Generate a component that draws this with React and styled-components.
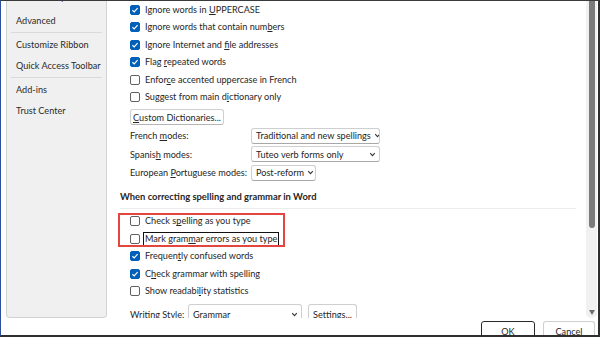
import React from "react";
import styled, { createGlobalStyle } from "styled-components";

const GlobalStyle = createGlobalStyle`
  body {
    margin: 0;
    overflow: hidden;
    background: #fff;
    font-family: Lato, "Noto Sans", sans-serif;
    color: #262626;
  }
`;

const Frame = styled.div`
  width: 600px;
  height: 337px;
  box-sizing: border-box;
  border-top: 1px solid #3a3a3a;
  border-bottom: 2px solid #2e2e2e;
  border-left: 1px solid #2d4f9e;
  border-right: 2px solid #2e2e2e;
  display: flex;
  flex-direction: column;
  overflow: hidden;
  font-size: 9.15px;
`;

const Body = styled.div`
  display: flex;
  height: 317px;
  flex-shrink: 0;
`;

const SideColumn = styled.div`
  width: 106px;
  padding-left: 5px;
  box-sizing: border-box;
  flex-shrink: 0;
`;

const SidePanel = styled.div`
  height: 100%;
  box-sizing: border-box;
  background: #f0f0f0;
  border: 1px solid #d2d2d2;
  border-top: none;
  border-radius: 0 0 4px 4px;
  overflow: hidden;
  padding: 0 4px;
`;

const SideList = styled.div`
  margin-top: -14.5px;
`;

const SideItem = styled.div`
  height: 21px;
  line-height: 21px;
  padding-left: 5px;
  white-space: nowrap;
  color: #2b2b2b;
  &:first-child {
    height: 23px;
    line-height: 20px;
  }
`;

const SideSep = styled.div`
  height: 1px;
  margin: 1px 0;
  background: #dadada;
`;

const Main = styled.div`
  flex: 1;
  display: flex;
  overflow: hidden;
`;

const Content = styled.div`
  flex: 1;
  padding: 0 10px 0 13px;
  overflow: hidden;
`;

const Row = styled.div`
  display: flex;
  align-items: center;
  gap: 5px;
  height: 17.5px;
  margin-left: 10px;
  white-space: nowrap;
`;

const Box = styled.span`
  width: 10px;
  height: 10px;
  box-sizing: border-box;
  border-radius: 2px;
  border: 1px solid ${(p) => (p.$checked ? "#005fb8" : "#616161")};
  background: ${(p) => (p.$checked ? "#005fb8" : "#fff")};
  display: inline-flex;
  align-items: center;
  justify-content: center;
  flex-shrink: 0;
`;

const Label = styled.span`
  padding: 0 1px;
  line-height: 12px;
  border: 1px solid ${(p) => (p.$focused ? "#111" : "transparent")};
  margin-left: -2px;
`;

const Key = styled.span`
  text-decoration: underline;
  text-underline-offset: 1px;
`;

const Button = styled.button`
  font: inherit;
  color: #262626;
  background: #fff;
  border: 1px solid ${(p) => (p.$primary ? "#2a2a2a" : "#cfcfcf")};
  border-bottom-color: ${(p) => (p.$primary ? "#2a2a2a" : "#b5b5b5")};
  border-radius: 3px;
  height: ${(p) => p.$h || 16}px;
  width: ${(p) => p.$w}px;
  padding: 0;
  display: inline-flex;
  align-items: center;
  justify-content: center;
  white-space: nowrap;
  flex-shrink: 0;
`;

const DictButton = styled(Button)`
  margin: 3px 0 1.5px 10px;
`;

const ModeRow = styled.div`
  display: flex;
  align-items: center;
  height: 18.5px;
  margin-left: 10px;
  white-space: nowrap;
`;

const ModeLabel = styled.span`
  width: ${(p) => p.$w}px;
  flex-shrink: 0;
`;

const Select = styled.div`
  width: ${(p) => p.$w}px;
  height: ${(p) => p.$h || 16}px;
  box-sizing: border-box;
  border: 1px solid #cfcfcf;
  border-bottom-color: #a8a8a8;
  border-radius: 3px;
  display: flex;
  align-items: center;
  justify-content: space-between;
  gap: 3px;
  padding: 0 3px 0 4px;
  flex-shrink: 0;
  overflow: hidden;
  svg {
    flex-shrink: 0;
  }
`;

const Heading = styled.div`
  font-weight: 700;
  font-size: 9.4px;
  line-height: 16px;
  padding: 7px 0 3px;
  margin-bottom: 3.5px;
  border-bottom: 1px solid #ededed;
  white-space: nowrap;
`;

const Highlight = styled.div`
  position: relative;
  &::after {
    content: "";
    position: absolute;
    left: -2px;
    top: 0.5px;
    width: 167px;
    height: 33.5px;
    box-sizing: border-box;
    border: 2px solid #e4463f;
    pointer-events: none;
  }
`;

const StyleRow = styled(ModeRow)`
  margin-top: 5px;
  height: 18px;
  gap: 6px;
`;

const ScrollTrack = styled.div`
  width: 11px;
  margin-right: 1px;
  background: #f1f1f1;
  border-radius: 0 0 5px 5px;
  display: flex;
  flex-direction: column;
  align-items: center;
  flex-shrink: 0;
`;

const Thumb = styled.div`
  width: 6px;
  height: 227px;
  background: #7b7b7b;
  border-radius: 0 0 3px 3px;
`;

const Arrow = styled.div`
  margin-top: auto;
  margin-bottom: 3px;
  width: 0;
  height: 0;
  border-left: 3.5px solid transparent;
  border-right: 3.5px solid transparent;
  border-top: 5px solid #6d6d6d;
`;

const Footer = styled.div`
  flex: 1;
  display: flex;
  justify-content: flex-end;
  gap: 8px;
  padding: 3px 3px 0 0;
`;

const Check = () => (
  <svg width="8" height="8" viewBox="0 0 8 8">
    <path d="M1.4 4.2 L3.2 5.9 L6.6 2.2" fill="none" stroke="#fff" strokeWidth="1.2" />
  </svg>
);

const Chevron = () => (
  <svg width="7" height="5" viewBox="0 0 7 5">
    <path d="M1.2 1.2 L3.5 3.6 L5.8 1.2" fill="none" stroke="#333" strokeWidth="1.1" />
  </svg>
);

const Option = ({ checked, focused, children }) => (
  <Row>
    <Box $checked={checked}>{checked && <Check />}</Box>
    <Label $focused={focused}>{children}</Label>
  </Row>
);

export default function App() {
  return (
    <>
      <GlobalStyle />
      <Frame>
        <Body>
          <SideColumn>
            <SidePanel>
              <SideList>
                <SideItem>Accessibility</SideItem>
                <SideItem>Advanced</SideItem>
                <SideSep />
                <SideItem>Customize Ribbon</SideItem>
                <SideItem>Quick Access Toolbar</SideItem>
                <SideSep />
                <SideItem>Add-ins</SideItem>
                <SideItem>Trust Center</SideItem>
              </SideList>
            </SidePanel>
          </SideColumn>
          <Main>
            <Content>
              <Option checked>
                Ignore words in <Key>U</Key>PPERCASE
              </Option>
              <Option checked>
                Ignore words that contain num<Key>b</Key>ers
              </Option>
              <Option checked>
                Ignore Internet and <Key>f</Key>ile addresses
              </Option>
              <Option checked>
                Flag <Key>r</Key>epeated words
              </Option>
              <Option>
                Enfor<Key>c</Key>e accented uppercase in French
              </Option>
              <Option>
                Suggest from main d<Key>i</Key>ctionary only
              </Option>
              <DictButton $w={94}>
                <Key>C</Key>ustom Dictionaries...
              </DictButton>
              <ModeRow>
                <ModeLabel $w={121}>
                  French <Key>m</Key>odes:
                </ModeLabel>
                <Select $w={129}>
                  Traditional and new spellings <Chevron />
                </Select>
              </ModeRow>
              <ModeRow>
                <ModeLabel $w={121}>
                  Spanis<Key>h</Key> modes:
                </ModeLabel>
                <Select $w={129}>
                  Tuteo verb forms only <Chevron />
                </Select>
              </ModeRow>
              <ModeRow>
                <ModeLabel $w={121}>
                  European <Key>P</Key>ortuguese modes:
                </ModeLabel>
                <Select $w={65}>
                  Post-reform <Chevron />
                </Select>
              </ModeRow>
              <Heading>When correcting spelling and grammar in Word</Heading>
              <Highlight>
                <Option>
                  Check s<Key>p</Key>elling as you type
                </Option>
                <Option focused>
                  Mark gram<Key>m</Key>ar errors as you type
                </Option>
              </Highlight>
              <Option checked>
                Frequen<Key>t</Key>ly confused words
              </Option>
              <Option checked>
                C<Key>h</Key>eck grammar with spelling
              </Option>
              <Option>
                Show readabi<Key>l</Key>ity statistics
              </Option>
              <StyleRow>
                <ModeLabel $w={52}>
                  <Key>W</Key>riting Style:
                </ModeLabel>
                <Select $w={114} $h={20}>
                  Grammar <Chevron />
                </Select>
                <Button $w={49} $h={20}>
                  Se<Key>t</Key>tings...
                </Button>
              </StyleRow>
            </Content>
            <ScrollTrack>
              <Thumb />
              <Arrow />
            </ScrollTrack>
          </Main>
        </Body>
        <Footer>
          <Button $primary $w={54} $h={20}>
            OK
          </Button>
          <Button $w={52} $h={20}>
            Cancel
          </Button>
        </Footer>
      </Frame>
    </>
  );
}
